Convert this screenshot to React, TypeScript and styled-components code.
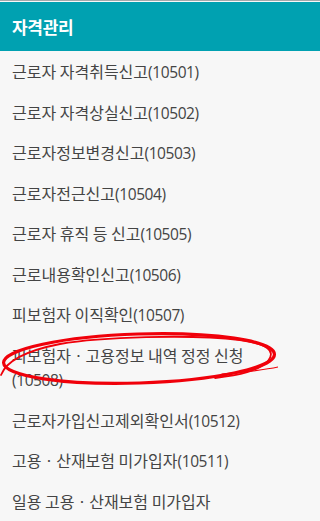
import React from "react";
import styled, { createGlobalStyle } from "styled-components";

const GlobalStyle = createGlobalStyle`
  html, body {
    margin: 0;
    padding: 0;
    background: #f7f7f7;
  }
  body {
    font-family: "Noto Sans CJK KR", "Noto Sans", sans-serif;
  }
`;

type Item = { name: string; code?: string };

const menuItems: Item[] = [
  { name: "근로자 자격취득신고", code: "10501" },
  { name: "근로자 자격상실신고", code: "10502" },
  { name: "근로자정보변경신고", code: "10503" },
  { name: "근로자전근신고", code: "10504" },
  { name: "근로자 휴직 등 신고", code: "10505" },
  { name: "근로내용확인신고", code: "10506" },
  { name: "피보험자 이직확인", code: "10507" },
  { name: "피보험자ㆍ고용정보 내역 정정 신청", code: "10508" },
  { name: "근로자가입신고제외확인서", code: "10512" },
  { name: "고용ㆍ산재보험 미가입자", code: "10511" },
  { name: "일용 고용ㆍ산재보험 미가입자" },
];

// red hand-drawn circle around the 10508 item
const Highlight = () => (
  <Marker viewBox="0 0 278 521" width="278" height="521">
    <g fill="none" stroke="#f0000a" strokeLinecap="round">
      <ellipse
        cx="139"
        cy="357.5"
        rx="135.5"
        ry="24.5"
        strokeWidth="3.2"
        transform="rotate(-1.8 139 357.5)"
      />
      <path
        d="M 1 374 C 4 366, 14 352, 60 343 C 100 336, 190 333, 240 339 C 268 343, 276 350, 268 360 C 258 370, 240 374, 215 377"
        strokeWidth="1.8"
      />
      <path d="M 222 373 C 245 371, 265 369, 278 366" strokeWidth="1.2" />
    </g>
  </Marker>
);

export default function App() {
  return (
    <>
      <GlobalStyle />
      <Panel>
        <Header>자격관리</Header>
        <MenuList>
          {menuItems.map((item) => (
            <MenuItem key={item.name}>
              {item.name}
              {item.code && <Code>({item.code})</Code>}
            </MenuItem>
          ))}
        </MenuList>
        <Highlight />
      </Panel>
    </>
  );
}

const Panel = styled.nav`
  position: relative;
  width: 100%;
  height: 521px;
  overflow: hidden;
  background: #f7f7f7;
  border-top: 1px solid #a4a9ab;
  box-sizing: border-box;
`;

const Header = styled.h2`
  margin: 1px 0 0;
  height: 49px;
  padding: 0 12px;
  display: flex;
  align-items: center;
  background: #00a1b1;
  color: #ffffff;
  font-size: 17px;
  font-weight: 700;
  letter-spacing: -0.3px;
`;

const MenuList = styled.ul`
  list-style: none;
  margin: 0;
  padding: 0;
`;

const MenuItem = styled.li`
  width: 254px;
  padding: 8px 12px;
  font-size: 16px;
  line-height: 24.5px;
  color: #444444;
`;

const Code = styled.span`
  font-family: "Open Sans", "Liberation Sans", sans-serif;
  font-size: 15.5px;
  line-height: 1;
  letter-spacing: -0.4px;
`;

const Marker = styled.svg`
  position: absolute;
  top: 0;
  left: 0;
  pointer-events: none;
`;
